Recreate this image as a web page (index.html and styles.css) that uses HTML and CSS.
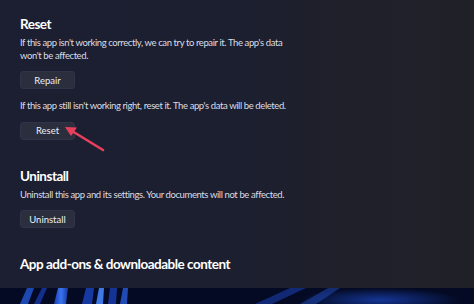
FILE: index.html
```html
<!DOCTYPE html>
<html lang="en">
  <head>
    <meta charset="UTF-8" />
    <meta name="viewport" content="width=device-width, initial-scale=1.0" />
    <title>App settings</title>
    <link rel="stylesheet" href="styles.css">
  </head>
  <body>
    <div class="settings">
      <section class="group">
        <h2>Reset</h2>
        <p>If this app isn't working correctly, we can try to repair it. The app's data won't be affected.</p>
        <button class="btn">Repair</button>
        <p class="note">If this app still isn't working right, reset it. The app's data will be deleted.</p>
        <div class="btn-wrap">
          <button class="btn">Reset</button>
          <svg class="arrow" width="50" height="34" viewBox="0 0 50 34">
            <line x1="43" y1="32" x2="12" y2="13" stroke="#e8405c" stroke-width="2.6" stroke-linecap="round" />
            <polygon points="5,9 17,9.5 11,18" fill="#e8405c" />
          </svg>
        </div>
      </section>

      <section class="group">
        <h2>Uninstall</h2>
        <p class="note-wide">Uninstall this app and its settings. Your documents will not be affected.</p>
        <button class="btn">Uninstall</button>
      </section>

      <section class="group">
        <h2>App add-ons &amp; downloadable content</h2>
        <div class="card"></div>
      </section>
    </div>

    <div class="wallpaper">
      <svg width="474" height="16" viewBox="0 0 474 16" preserveAspectRatio="none">
        <defs>
          <radialGradient id="glow" cx="0.5" cy="0.5" r="0.5">
            <stop offset="0" stop-color="#1840b0" stop-opacity="0.8" />
            <stop offset="1" stop-color="#1840b0" stop-opacity="0" />
          </radialGradient>
          <linearGradient id="ribbon" x1="0" y1="0" x2="1" y2="0">
            <stop offset="0" stop-color="#1a3cb0" />
            <stop offset="0.5" stop-color="#3a74f0" />
            <stop offset="1" stop-color="#1638a0" />
          </linearGradient>
        </defs>
        <rect width="474" height="16" fill="#040a24" />
        <ellipse cx="380" cy="12" rx="80" ry="12" fill="url(#glow)" />
        <polygon points="20,16 27,0 34,0 28,16" fill="#2456d4" opacity="0.8" />
        <polygon points="34,16 42,0 47,0 40,16" fill="#1a3fb8" opacity="0.7" />
        <polygon points="54,16 58,0 68,0 66,16" fill="url(#ribbon)" />
        <polygon points="82,16 86,0 94,0 92,16" fill="#1c44c0" opacity="0.8" />
        <polygon points="96,16 99,0 104,0 103,16" fill="#4584fa" opacity="0.9" />
        <polygon points="108,16 110,0 117,0 116,16" fill="#1a3db0" opacity="0.8" />
        <polygon points="120,16 123,0 128,0 127,16" fill="#2a5ad8" opacity="0.8" />
        <polygon points="255,16 290,0 306,0 272,16" fill="#1e47c4" opacity="0.5" />
        <polygon points="300,16 328,0 340,0 316,16" fill="#2b5de0" opacity="0.4" />
      </svg>
    </div>
  </body>
</html>
```

FILE: styles.css
```css
* {
  margin: 0;
  padding: 0;
  box-sizing: border-box;
}

body {
  width: 474px;
  height: 304px;
  overflow: hidden;
  font-family: Lato, "Noto Sans", sans-serif;
  color: #e6e7ec;
  background: linear-gradient(to right, #1b1f31 0%, #1c1f30 50%, #1f2029 75%, #202128 100%);
}

/* Settings page */
.settings {
  height: 288px;
  overflow: hidden;
  padding: 15px 20px 0;
}

.group {
  display: flex;
  flex-direction: column;
  align-items: flex-start;
  margin-bottom: 27px;
}

.group h2 {
  font-size: 13.5px;
  line-height: 18px;
  font-weight: 700;
  letter-spacing: -0.5px;
  color: #ffffff;
  margin-bottom: 4px;
}

.group p {
  font-size: 9.5px;
  line-height: 12.5px;
  letter-spacing: -0.4px;
  color: #dcdde3;
  max-width: 268px;
}

.group p.note,
.group p.note-wide {
  max-width: none;
}

.group p.note {
  margin-top: 11px;
}

.btn {
  width: 55px;
  height: 18px;
  margin-top: 9px;
  font-family: inherit;
  font-size: 9.5px;
  color: #eceef2;
  background-color: #2b2e3d;
  border: 1px solid #30334a;
  border-radius: 3px;
  cursor: pointer;
}

.btn-wrap {
  position: relative;
}

.arrow {
  position: absolute;
  left: 40px;
  top: 5px;
}

.card {
  width: 170px;
  height: 10px;
  margin-top: 13px;
  background-color: #272a35;
  border-radius: 4px 4px 0 0;
}

/* Desktop strip under the window */
.wallpaper {
  height: 16px;
  line-height: 0;
}
```
